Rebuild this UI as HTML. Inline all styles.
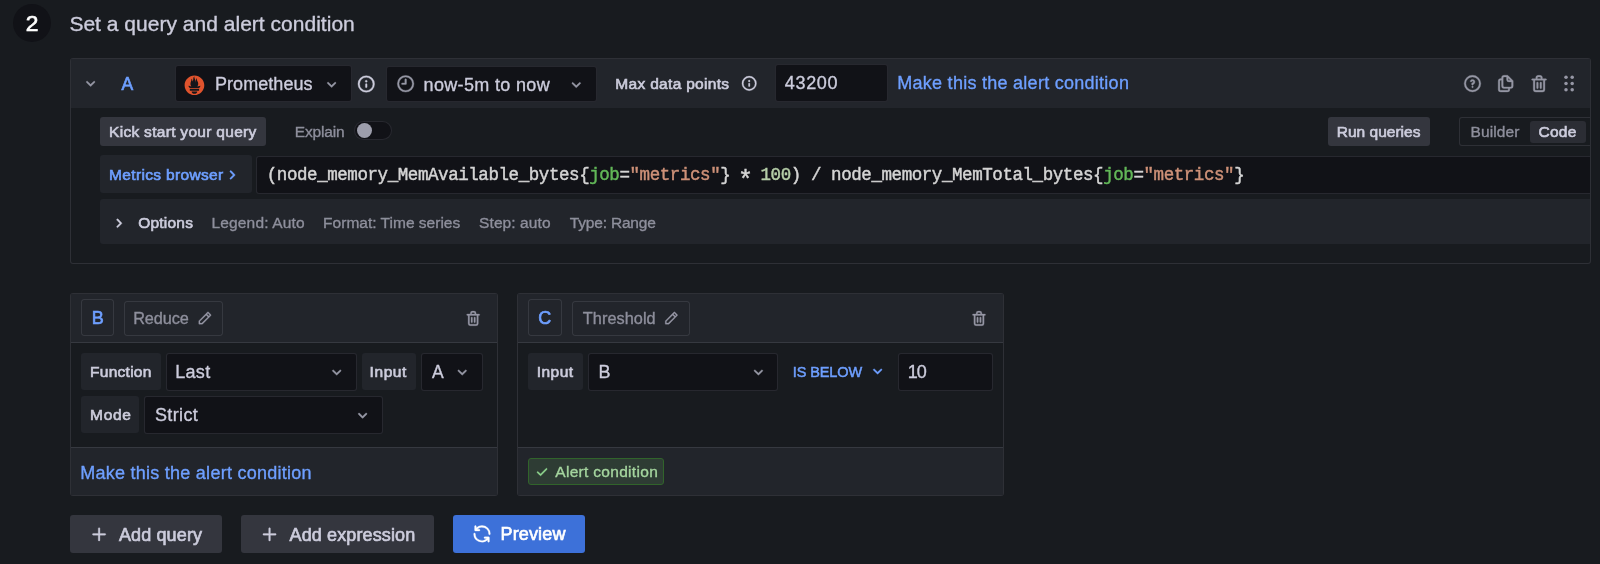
<!DOCTYPE html>
<html lang="en">
<head>
<meta charset="utf-8">
<title>Set a query and alert condition</title>
<style>
*{box-sizing:border-box;margin:0;padding:0}
html,body{width:1600px;height:564px;overflow:hidden;background:#181b1f}
body{position:relative;font-family:"Liberation Sans",Arial,sans-serif;color:#ccccdc;font-size:17.5px;-webkit-font-smoothing:antialiased}
.abs{position:absolute}
.t{position:absolute;white-space:nowrap;line-height:1;-webkit-text-stroke:0.35px currentColor}
.panel{position:absolute;border:1px solid rgba(204,204,220,0.12);border-radius:3px;background:#181b1f}
.hdr{position:absolute;background:#22252b}
.inp{position:absolute;background:#111217;border:1px solid rgba(204,204,220,0.12);border-radius:3px}
.lbl{position:absolute;background:#22252b;border-radius:3px}
.btn2{position:absolute;background:#34363e;border-radius:3px}
.b{-webkit-text-stroke:0.65px currentColor}
.m{-webkit-text-stroke:0.5px currentColor}
.sec{color:#8e8f9c}
.link{color:#6e9fff}
svg{position:absolute;overflow:visible}
.code{font-family:"Liberation Mono",monospace;color:#d4d4d4;-webkit-text-stroke:0.45px currentColor}
</style>
</head>
<body>
<div id="root" style="position:absolute;left:0;top:0;width:1600px;height:564px;will-change:transform">

<!-- step number -->
<div class="abs" style="left:13px;top:3.5px;width:38px;height:38px;border-radius:50%;background:#111217"></div>
<div class="t b" id="t_num" style="left:25.64px;top:12px;font-size:22.8px;letter-spacing:0.000px;color:#fff">2</div>
<div class="t" id="t_title" style="left:69.40px;top:13px;font-size:21.0px;letter-spacing:0.018px;color:#ccccdc">Set a query and alert condition</div>

<!-- Query A panel -->
<div class="panel" style="left:70px;top:58px;width:1521px;height:206px"></div>
<div class="hdr" style="left:71px;top:59px;width:1519px;height:49px"></div>

<div class="t b link" id="t_A" style="left:121.49px;top:76px;font-size:17.5px;letter-spacing:0.000px;">A</div>

<!-- datasource picker -->
<div class="inp" style="left:175px;top:65px;width:177px;height:37px"></div>
<div class="t" id="t_prom" style="left:214.98px;top:75px;font-size:18.0px;letter-spacing:0.063px;">Prometheus</div>

<!-- info icon -->

<!-- time range -->
<div class="inp" style="left:386px;top:66px;width:211px;height:36px"></div>
<div class="t" id="t_time" style="left:423.58px;top:76px;font-size:18.0px;letter-spacing:0.339px;">now-5m to now</div>

<!-- max data points -->
<div class="t b" id="t_mdp" style="left:615.36px;top:76px;font-size:15.5px;letter-spacing:0.308px;">Max data points</div>
<div class="inp" style="left:775px;top:64px;width:113px;height:38px"></div>
<div class="t" id="t_43200" style="left:784.72px;top:74px;font-size:18.0px;letter-spacing:0.702px;">43200</div>
<div class="t link" id="t_mk1" style="left:897.28px;top:74px;font-size:18.0px;letter-spacing:0.268px;">Make this the alert condition</div>

<!-- header action icons -->

<!-- row 2 -->
<div class="btn2" style="left:100px;top:117px;width:166px;height:29px"></div>
<div class="t b" id="t_kick" style="left:109.00px;top:124px;font-size:15.5px;letter-spacing:0.300px;">Kick start your query</div>
<div class="t sec" id="t_explain" style="left:294.72px;top:124px;font-size:15.5px;letter-spacing:-0.157px;">Explain</div>
<div class="abs" style="left:354px;top:121px;width:38px;height:19px;border-radius:10px;background:#111217;border:1px solid rgba(204,204,220,0.12)"></div>
<div class="abs" style="left:357px;top:123px;width:15px;height:15px;border-radius:50%;background:#9d9eac"></div>

<div class="btn2" style="left:1328px;top:117px;width:102px;height:29px"></div>
<div class="t b" id="t_run" style="left:1336.76px;top:124px;font-size:15.5px;letter-spacing:0.013px;">Run queries</div>
<div class="abs" style="left:1459px;top:117px;width:131px;height:29px;border:1px solid rgba(204,204,220,0.12);border-right:0;border-radius:3px 0 0 3px;background:#181b1f"></div>
<div class="t sec" id="t_builder" style="left:1470.53px;top:124px;font-size:15.5px;letter-spacing:0.113px;">Builder</div>
<div class="abs" style="left:1530px;top:121px;width:56px;height:22px;border-radius:3px;background:#2b2d34"></div>
<div class="t b" id="t_code" style="left:1538.58px;top:124px;font-size:15.5px;letter-spacing:0.217px;">Code</div>

<!-- row 3 -->
<div class="lbl" style="left:100px;top:155px;width:152px;height:38px"></div>
<div class="t b link" id="t_mb" style="left:109.09px;top:167px;font-size:15.5px;letter-spacing:0.337px;">Metrics browser</div>
<div class="abs" style="left:256px;top:156px;width:1334px;height:38px;background:#111217;border:1px solid rgba(204,204,220,0.12);border-right:0;border-radius:3px 0 0 3px"></div>
<div class="t code" id="t_codeline" style="left:266.75px;top:167px;font-size:17.5px;letter-spacing:-0.425px;"><span>(node_memory_MemAvailable_bytes{</span><span style="color:#62b758">job</span><span>=</span><span style="color:#ce9178">"metrics"</span><span>} </span><span style="display:inline-block;width:10.08px;position:relative;top:7.8px;font-size:25px;line-height:0;text-indent:-2.46px">*</span><span> </span><span style="color:#b5cea8">100</span><span>) / node_memory_MemTotal_bytes{</span><span style="color:#62b758">job</span><span>=</span><span style="color:#ce9178">"metrics"</span><span>}</span></div>

<!-- options row -->
<div class="lbl" style="left:100px;top:199px;width:1490px;height:45px;border-radius:3px 0 0 3px"></div>
<div class="t b" id="t_opt" style="left:138.20px;top:215px;font-size:15.5px;letter-spacing:0.223px;">Options</div>
<div class="t sec" id="t_leg" style="left:211.55px;top:215px;font-size:15.5px;letter-spacing:0.147px;">Legend: Auto</div>
<div class="t sec" id="t_fmt" style="left:323.12px;top:215px;font-size:15.5px;letter-spacing:0.011px;">Format: Time series</div>
<div class="t sec" id="t_step" style="left:479.11px;top:215px;font-size:15.5px;letter-spacing:0.083px;">Step: auto</div>
<div class="t sec" id="t_type" style="left:569.83px;top:215px;font-size:15.5px;letter-spacing:-0.188px;">Type: Range</div>

<!-- Expression B -->
<div class="panel" style="left:70px;top:293px;width:428px;height:203px"></div>
<div class="hdr" style="left:71px;top:294px;width:426px;height:49px;border-bottom:1px solid rgba(204,204,220,0.12)"></div>
<div class="abs" style="left:81px;top:299px;width:33px;height:37px;border:1px solid rgba(204,204,220,0.12);border-radius:3px"></div>
<div class="t b link" id="t_B" style="left:91.71px;top:309px;font-size:18.0px;letter-spacing:0.000px;">B</div>
<div class="abs" style="left:124px;top:301px;width:99px;height:35px;border:1px solid rgba(204,204,220,0.12);border-radius:3px"></div>
<div class="t sec" id="t_reduce" style="left:133.20px;top:310px;font-size:16.3px;letter-spacing:-0.091px;">Reduce</div>

<div class="lbl" style="left:81px;top:353px;width:80px;height:37px"></div>
<div class="t b" id="t_fn" style="left:90.11px;top:364px;font-size:15.5px;letter-spacing:0.259px;">Function</div>
<div class="inp" style="left:166px;top:353px;width:191px;height:38px"></div>
<div class="t" id="t_last" style="left:175.15px;top:363px;font-size:18.0px;letter-spacing:0.356px;">Last</div>
<div class="lbl" style="left:362px;top:353px;width:54px;height:37px"></div>
<div class="t b" id="t_in1" style="left:369.59px;top:364px;font-size:15.5px;letter-spacing:0.563px;">Input</div>
<div class="inp" style="left:421px;top:353px;width:62px;height:38px"></div>
<div class="t" id="t_selA" style="left:432.07px;top:364px;font-size:17.5px;letter-spacing:0.000px;">A</div>

<div class="lbl" style="left:81px;top:396px;width:58px;height:37px"></div>
<div class="t b" id="t_mode" style="left:90.11px;top:407px;font-size:15.5px;letter-spacing:0.673px;">Mode</div>
<div class="inp" style="left:144px;top:396px;width:239px;height:38px"></div>
<div class="t" id="t_strict" style="left:154.90px;top:406px;font-size:18.0px;letter-spacing:0.378px;">Strict</div>

<div class="hdr" style="left:71px;top:447px;width:426px;height:48px;border-top:1px solid rgba(204,204,220,0.12)"></div>
<div class="t link" id="t_mk2" style="left:80.21px;top:464px;font-size:18.0px;letter-spacing:0.257px;">Make this the alert condition</div>

<!-- Expression C -->
<div class="panel" style="left:517px;top:293px;width:487px;height:203px"></div>
<div class="hdr" style="left:518px;top:294px;width:485px;height:49px;border-bottom:1px solid rgba(204,204,220,0.12)"></div>
<div class="abs" style="left:528px;top:299px;width:34px;height:37px;border:1px solid rgba(204,204,220,0.12);border-radius:3px"></div>
<div class="t b link" id="t_C" style="left:538.37px;top:309px;font-size:18.0px;letter-spacing:0.000px;">C</div>
<div class="abs" style="left:572px;top:301px;width:118px;height:35px;border:1px solid rgba(204,204,220,0.12);border-radius:3px"></div>
<div class="t sec" id="t_thr" style="left:582.80px;top:310px;font-size:16.3px;letter-spacing:0.059px;">Threshold</div>

<div class="lbl" style="left:528px;top:353px;width:55px;height:37px"></div>
<div class="t b" id="t_in2" style="left:536.64px;top:364px;font-size:15.5px;letter-spacing:0.490px;">Input</div>
<div class="inp" style="left:588px;top:353px;width:190px;height:38px"></div>
<div class="t" id="t_selB" style="left:598.47px;top:363px;font-size:18.0px;letter-spacing:0.000px;">B</div>
<div class="t link m" id="t_isb" style="left:792.77px;top:365px;font-size:14.5px;letter-spacing:-0.097px;">IS BELOW</div>
<div class="inp" style="left:898px;top:353px;width:95px;height:38px"></div>
<div class="t" id="t_10" style="left:907.64px;top:363px;font-size:18.0px;letter-spacing:-0.917px;">10</div>

<div class="hdr" style="left:518px;top:447px;width:485px;height:48px;border-top:1px solid rgba(204,204,220,0.12)"></div>
<div class="abs" style="left:528px;top:458px;width:136px;height:27px;border:1px solid #31642b;border-radius:3px;background:#2e3c34"></div>
<div class="t" id="t_ac" style="left:555.31px;top:464px;font-size:15.5px;letter-spacing:0.302px;color:#a5d69f">Alert condition</div>

<!-- bottom buttons -->
<div class="btn2" style="left:70px;top:515px;width:152px;height:38px"></div>
<div class="t b" id="t_addq" style="left:118.90px;top:526px;font-size:18.0px;letter-spacing:0.135px;">Add query</div>
<div class="btn2" style="left:241px;top:515px;width:193px;height:38px"></div>
<div class="t b" id="t_adde" style="left:289.50px;top:526px;font-size:18.0px;letter-spacing:0.126px;">Add expression</div>
<div class="abs" style="left:453px;top:515px;width:132px;height:38px;border-radius:3px;background:#3d71d9"></div>
<div class="t b" id="t_prev" style="left:500.57px;top:525px;font-size:18.0px;letter-spacing:0.136px;color:#fff">Preview</div>

<svg id="icons" style="left:0;top:0" width="1600" height="564" viewBox="0 0 1600 564">
<circle cx="194.45" cy="85.25" r="9.25" fill="#15161b"/>
<path transform="translate(184.60 75.40) scale(0.8208)" fill="#e0532d" d="M12 0C5.373 0 0 5.372 0 12c0 6.627 5.373 12 12 12s12-5.373 12-12c0-6.628-5.373-12-12-12zm0 22.460c-1.885 0-3.414-1.260-3.414-2.814h6.828c0 1.553-1.528 2.813-3.414 2.813zm5.640-3.745H6.360v-2.046h11.280v2.046zm-.040-3.098H6.391c-.037-.043-.075-.086-.111-.130-1.155-1.401-1.427-2.133-1.690-2.879-.005-.025 1.400.287 2.395.511 0 0 .513.119 1.262.255-.720-.843-1.147-1.915-1.147-3.010 0-2.406 1.845-4.508 1.180-6.207.648.053 1.340 1.367 1.387 3.422.689-.951.977-2.690.977-3.755 0-1.103.727-2.385 1.454-2.429-.648 1.069.168 1.984.894 4.256.272.854.237 2.290.447 3.201.070-1.892.395-4.652 1.595-5.605-.529 1.200.079 2.702.494 3.424.671 1.164 1.078 2.047 1.078 3.716 0 1.119-.413 2.173-1.110 2.996.792-.149 1.340-.283 1.340-.283l2.573-.502s-.374 1.538-1.810 3.019z"/>
<path transform="translate(80.60 73.75) scale(0.8333)" fill="#9697a5" stroke="#9697a5" stroke-width="0.4" d="M17,9.170a1,1,0,0,0-1.410,0L12,12.710,8.460,9.170a1,1,0,0,0-1.410,0,1,1,0,0,0,0,1.420l4.240,4.240a1,1,0,0,0,1.420,0L17,10.590A1,1,0,0,0,17,9.170Z"/>
<path transform="translate(321.60 74.75) scale(0.8333)" fill="#9697a5" stroke="#9697a5" stroke-width="0.4" d="M17,9.170a1,1,0,0,0-1.410,0L12,12.710,8.460,9.170a1,1,0,0,0-1.410,0,1,1,0,0,0,0,1.420l4.240,4.240a1,1,0,0,0,1.420,0L17,10.590A1,1,0,0,0,17,9.170Z"/>
<path transform="translate(356.25 74.00) scale(0.8333)" fill="#ccccdc" stroke="#ccccdc" stroke-width="0.4" d="M12,2A10,10,0,1,0,22,12,10.010,10.010,0,0,0,12,2Zm0,18a8,8,0,1,1,8-8A8.010,8.010,0,0,1,12,20Zm0-8.500a1,1,0,0,0-1,1v3a1,1,0,0,0,2,0v-3A1,1,0,0,0,12,11.500Zm0-4a1.250,1.250,0,1,0,1.250,1.250A1.250,1.250,0,0,0,12,7.500Z"/>
<path transform="translate(395.65 73.75) scale(0.8333)" fill="#9697a5" stroke="#9697a5" stroke-width="0.4" d="M12,2A10,10,0,1,0,22,12,10.010,10.010,0,0,0,12,2Zm0,18a8,8,0,1,1,8-8A8.010,8.010,0,0,1,12,20ZM12,6a1,1,0,0,0-1,1v4H8a1,1,0,0,0,0,2h4a1,1,0,0,0,1-1V7A1,1,0,0,0,12,6Z"/>
<path transform="translate(566.25 75.00) scale(0.8333)" fill="#9697a5" stroke="#9697a5" stroke-width="0.4" d="M17,9.170a1,1,0,0,0-1.410,0L12,12.710,8.460,9.170a1,1,0,0,0-1.410,0,1,1,0,0,0,0,1.420l4.240,4.240a1,1,0,0,0,1.420,0L17,10.590A1,1,0,0,0,17,9.170Z"/>
<path transform="translate(740.45 74.65) scale(0.7292)" fill="#ccccdc" stroke="#ccccdc" stroke-width="0.4" d="M12,2A10,10,0,1,0,22,12,10.010,10.010,0,0,0,12,2Zm0,18a8,8,0,1,1,8-8A8.010,8.010,0,0,1,12,20Zm0-8.500a1,1,0,0,0-1,1v3a1,1,0,0,0,2,0v-3A1,1,0,0,0,12,11.500Zm0-4a1.250,1.250,0,1,0,1.250,1.250A1.250,1.250,0,0,0,12,7.500Z"/>
<path transform="translate(1462.50 73.55) scale(0.8333)" fill="#9697a5" stroke="#9697a5" stroke-width="0.4" d="M11.290,15.290a1.580,1.580,0,0,0-.12.150.76.76,0,0,0-.09.180.64.64,0,0,0-.06.180,1.360,1.360,0,0,0,0,.2.840.840,0,0,0,.08.380.9.9,0,0,0,.54.540.940.940,0,0,0,.76,0,.9.9,0,0,0,.54-.54A1,1,0,0,0,13,16a1,1,0,0,0-.29-.71A1,1,0,0,0,11.290,15.290ZM12,2A10,10,0,1,0,22,12,10,10,0,0,0,12,2Zm0,18a8,8,0,1,1,8-8A8,8,0,0,1,12,20ZM12,7A3,3,0,0,0,9.400,8.500a1,1,0,1,0,1.730,1A1,1,0,0,1,12,9a1,1,0,0,1,0,2,1,1,0,0,0-1,1v1a1,1,0,0,0,2,0v-.18A3,3,0,0,0,12,7Z"/>
<path transform="translate(1495.70 73.60) scale(0.8333)" fill="#9697a5" stroke="#9697a5" stroke-width="0.4" d="M21,8.940a1.310,1.310,0,0,0-.06-.27l0-.09a1.070,1.070,0,0,0-.19-.28h0l-6-6h0a1.070,1.070,0,0,0-.28-.19.320.320,0,0,0-.09,0A.880.880,0,0,0,14.050,2H10A3,3,0,0,0,7,5V6H6A3,3,0,0,0,3,9V19a3,3,0,0,0,3,3h8a3,3,0,0,0,3-3V18h1a3,3,0,0,0,3-3V9S21,9,21,8.940ZM15,5.410,17.590,8H16a1,1,0,0,1-1-1ZM15,19a1,1,0,0,1-1,1H6a1,1,0,0,1-1-1V9A1,1,0,0,1,6,8H7v7a3,3,0,0,0,3,3h5Zm4-4a1,1,0,0,1-1,1H10a1,1,0,0,1-1-1V5a1,1,0,0,1,1-1h3V7a3,3,0,0,0,3,3h3Z"/>
<path transform="translate(1529.10 73.70) scale(0.8333)" fill="#9697a5" stroke="#9697a5" stroke-width="0.4" d="M10,18a1,1,0,0,0,1-1V11a1,1,0,0,0-2,0v6A1,1,0,0,0,10,18ZM20,6H16V5a3,3,0,0,0-3-3H11A3,3,0,0,0,8,5V6H4A1,1,0,0,0,4,8H5V19a3,3,0,0,0,3,3h8a3,3,0,0,0,3-3V8h1a1,1,0,0,0,0-2ZM10,5a1,1,0,0,1,1-1h2a1,1,0,0,1,1,1V6H10Zm7,14a1,1,0,0,1-1,1H8a1,1,0,0,1-1-1V8H17Zm-3-1a1,1,0,0,0,1-1V11a1,1,0,0,0-2,0v6A1,1,0,0,0,14,18Z"/>
<path transform="translate(222.50 165.00) scale(0.8333)" fill="#6e9fff" stroke="#6e9fff" stroke-width="0.4" d="M14.830,11.290,10.590,7.050a1,1,0,0,0-1.420,0,1,1,0,0,0,0,1.410L12.710,12,9.170,15.540a1,1,0,0,0,0,1.410,1,1,0,0,0,.71.290,1,1,0,0,0,.71-.29l4.240-4.240A1,1,0,0,0,14.830,11.290Z"/>
<path transform="translate(109.25 213.25) scale(0.8333)" fill="#ccccdc" stroke="#ccccdc" stroke-width="0.4" d="M14.830,11.290,10.590,7.050a1,1,0,0,0-1.420,0,1,1,0,0,0,0,1.410L12.710,12,9.170,15.540a1,1,0,0,0,0,1.410,1,1,0,0,0,.71.290,1,1,0,0,0,.71-.29l4.240-4.240A1,1,0,0,0,14.830,11.290Z"/>
<path transform="translate(197.50 310.60) scale(0.6250)" fill="#9697a5" stroke="#9697a5" stroke-width="0.4" d="M22,7.240a1,1,0,0,0-.29-.71L17.470,2.290A1,1,0,0,0,16.760,2a1,1,0,0,0-.71.290L13.220,5.120h0L2.290,16.050a1,1,0,0,0-.29.710V21a1,1,0,0,0,1,1H7.240A1,1,0,0,0,8,21.710L18.870,10.780h0L21.710,8a1.190,1.190,0,0,0,.22-.33,1,1,0,0,0,0-.24.700.700,0,0,0,0-.14ZM6.830,20H4V17.170l9.930-9.930,2.830,2.830ZM18.170,8.660,15.340,5.830l1.420-1.410,2.820,2.820Z"/>
<path transform="translate(464.45 309.65) scale(0.7292)" fill="#9697a5" stroke="#9697a5" stroke-width="0.4" d="M10,18a1,1,0,0,0,1-1V11a1,1,0,0,0-2,0v6A1,1,0,0,0,10,18ZM20,6H16V5a3,3,0,0,0-3-3H11A3,3,0,0,0,8,5V6H4A1,1,0,0,0,4,8H5V19a3,3,0,0,0,3,3h8a3,3,0,0,0,3-3V8h1a1,1,0,0,0,0-2ZM10,5a1,1,0,0,1,1-1h2a1,1,0,0,1,1,1V6H10Zm7,14a1,1,0,0,1-1,1H8a1,1,0,0,1-1-1V8H17Zm-3-1a1,1,0,0,0,1-1V11a1,1,0,0,0-2,0v6A1,1,0,0,0,14,18Z"/>
<path transform="translate(663.95 310.60) scale(0.6250)" fill="#9697a5" stroke="#9697a5" stroke-width="0.4" d="M22,7.240a1,1,0,0,0-.29-.71L17.470,2.290A1,1,0,0,0,16.760,2a1,1,0,0,0-.71.290L13.220,5.120h0L2.290,16.050a1,1,0,0,0-.29.710V21a1,1,0,0,0,1,1H7.240A1,1,0,0,0,8,21.710L18.870,10.780h0L21.710,8a1.190,1.190,0,0,0,.22-.33,1,1,0,0,0,0-.24.700.700,0,0,0,0-.14ZM6.830,20H4V17.170l9.930-9.930,2.830,2.830ZM18.170,8.660,15.340,5.830l1.420-1.410,2.820,2.820Z"/>
<path transform="translate(970.25 309.65) scale(0.7292)" fill="#9697a5" stroke="#9697a5" stroke-width="0.4" d="M10,18a1,1,0,0,0,1-1V11a1,1,0,0,0-2,0v6A1,1,0,0,0,10,18ZM20,6H16V5a3,3,0,0,0-3-3H11A3,3,0,0,0,8,5V6H4A1,1,0,0,0,4,8H5V19a3,3,0,0,0,3,3h8a3,3,0,0,0,3-3V8h1a1,1,0,0,0,0-2ZM10,5a1,1,0,0,1,1-1h2a1,1,0,0,1,1,1V6H10Zm7,14a1,1,0,0,1-1,1H8a1,1,0,0,1-1-1V8H17Zm-3-1a1,1,0,0,0,1-1V11a1,1,0,0,0-2,0v6A1,1,0,0,0,14,18Z"/>
<path transform="translate(326.70 362.50) scale(0.8333)" fill="#9697a5" stroke="#9697a5" stroke-width="0.4" d="M17,9.170a1,1,0,0,0-1.410,0L12,12.710,8.460,9.170a1,1,0,0,0-1.410,0,1,1,0,0,0,0,1.420l4.240,4.240a1,1,0,0,0,1.420,0L17,10.590A1,1,0,0,0,17,9.170Z"/>
<path transform="translate(452.20 362.50) scale(0.8333)" fill="#9697a5" stroke="#9697a5" stroke-width="0.4" d="M17,9.170a1,1,0,0,0-1.410,0L12,12.710,8.460,9.170a1,1,0,0,0-1.410,0,1,1,0,0,0,0,1.420l4.240,4.240a1,1,0,0,0,1.420,0L17,10.590A1,1,0,0,0,17,9.170Z"/>
<path transform="translate(352.60 405.60) scale(0.8333)" fill="#9697a5" stroke="#9697a5" stroke-width="0.4" d="M17,9.170a1,1,0,0,0-1.410,0L12,12.710,8.460,9.170a1,1,0,0,0-1.410,0,1,1,0,0,0,0,1.420l4.240,4.240a1,1,0,0,0,1.420,0L17,10.590A1,1,0,0,0,17,9.170Z"/>
<path transform="translate(748.40 362.50) scale(0.8333)" fill="#9697a5" stroke="#9697a5" stroke-width="0.4" d="M17,9.170a1,1,0,0,0-1.410,0L12,12.710,8.460,9.170a1,1,0,0,0-1.410,0,1,1,0,0,0,0,1.420l4.240,4.240a1,1,0,0,0,1.420,0L17,10.590A1,1,0,0,0,17,9.170Z"/>
<path transform="translate(867.60 361.50) scale(0.8333)" fill="#6e9fff" stroke="#6e9fff" stroke-width="0.4" d="M17,9.170a1,1,0,0,0-1.410,0L12,12.710,8.460,9.170a1,1,0,0,0-1.410,0,1,1,0,0,0,0,1.420l4.240,4.240a1,1,0,0,0,1.420,0L17,10.590A1,1,0,0,0,17,9.170Z"/>
<path transform="translate(533.35 463.25) scale(0.7292)" fill="#8fd68f" stroke="#8fd68f" stroke-width="0.4" d="M18.710,7.210a1,1,0,0,0-1.420,0L9.840,14.670,6.710,11.530A1,1,0,1,0,5.290,13l3.840,3.840a1,1,0,0,0,1.420,0l8.160-8.160A1,1,0,0,0,18.710,7.210Z"/>
<path transform="translate(89.10 524.30) scale(0.8333)" fill="#ccccdc" stroke="#ccccdc" stroke-width="0.4" d="M19,11H13V5a1,1,0,0,0-2,0v6H5a1,1,0,0,0,0,2h6v6a1,1,0,0,0,2,0V13h6a1,1,0,0,0,0-2Z"/>
<path transform="translate(259.55 524.30) scale(0.8333)" fill="#ccccdc" stroke="#ccccdc" stroke-width="0.4" d="M19,11H13V5a1,1,0,0,0-2,0v6H5a1,1,0,0,0,0,2h6v6a1,1,0,0,0,2,0V13h6a1,1,0,0,0,0-2Z"/>
<path transform="translate(472.00 523.90) scale(0.8333)" fill="#ffffff" stroke="#ffffff" stroke-width="0.4" d="M19.910,15.510H15.380a1,1,0,0,0,0,2h2.400A8,8,0,0,1,4,12a1,1,0,0,0-2,0,10,10,0,0,0,16.880,7.230V21a1,1,0,0,0,2,0V16.500A1,1,0,0,0,19.910,15.510ZM12,2A10,10,0,0,0,5.120,4.770V3a1,1,0,0,0-2,0V7.500a1,1,0,0,0,1,1h4.500a1,1,0,0,0,0-2H6.220A8,8,0,0,1,20,12a1,1,0,0,0,2,0A10,10,0,0,0,12,2Z"/>
<g fill="#9697a5"><circle cx="1566" cy="77.2" r="1.75"/><circle cx="1566" cy="83.5" r="1.75"/><circle cx="1566" cy="89.8" r="1.75"/><circle cx="1572.2" cy="77.2" r="1.75"/><circle cx="1572.2" cy="83.5" r="1.75"/><circle cx="1572.2" cy="89.8" r="1.75"/></g>
</svg>
</div>
</body>
</html>
